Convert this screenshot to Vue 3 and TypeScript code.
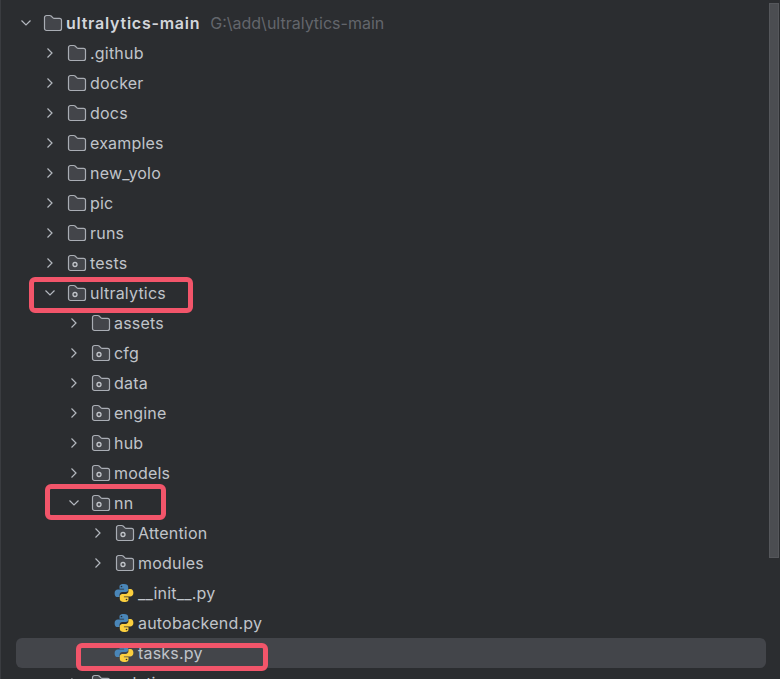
<template>
    <div class="panel">
        <div
            v-for="row in rows"
            :key="row.name + row.depth"
            class="row"
            :class="{ selected: row.selected }"
            :style="{ paddingLeft: 18 + row.depth * 24 - (row.selected ? 16 : 0) + 'px' }"
        >
            <span class="arrow">
                <svg v-if="row.kind !== 'py'" width="16" height="16" viewBox="0 0 16 16" fill="none">
                    <path v-if="row.open" d="M3.500 5.500 8 10l4.500-4.500" stroke="#b4b8bf" stroke-width="1.200" />
                    <path v-else d="M5.500 3.500 10 8l-4.500 4.500" stroke="#b4b8bf" stroke-width="1.200" />
                </svg>
            </span>
            <span class="icon">
                <svg v-if="row.kind === 'py'" class="py-icon" width="20" height="20" viewBox="0 0 20 20">
                    <path
                        d="M9.800 1c-3.800 0-4.300 1.500-4.300 2.800v2h4.600v.7H3.700C2.100 6.500.6 7.700.6 10.200s1.300 3.900 2.900 3.900h2v-2.200c0-1.600 1.300-2.900 2.900-2.900h3.400c1.300 0 2.400-1 2.400-2.300V3.900C14.200 2.300 12.800 1 9.800 1Z"
                        fill="#4a86b8"
                    />
                    <circle cx="7.500" cy="3.500" r=".8" fill="#2b2d30" />
                    <path
                        d="M10.200 19c3.800 0 4.300-1.500 4.300-2.800v-2H9.900v-.7h6.400c1.600 0 3.100-1.200 3.100-3.700s-1.300-3.900-2.900-3.900h-2v2.200c0 1.600-1.300 2.900-2.900 2.900H8.200c-1.300 0-2.400 1-2.400 2.300v2.800c0 1.600 1.400 2.900 4.400 2.900Z"
                        fill="#fbcf3e"
                    />
                    <circle cx="12.500" cy="16.500" r=".8" fill="#2b2d30" />
                </svg>
                <svg v-else width="20" height="20" viewBox="0 0 20 20" fill="none">
                    <path
                        d="M1.500 4.500a2 2 0 0 1 2-2h3.300c.5 0 1 .2 1.300.5l1.900 1.900c.3.300.7.400 1.100.400h5.400a2 2 0 0 1 2 2v8.200a2 2 0 0 1-2 2h-13a2 2 0 0 1-2-2V4.500Z"
                        fill="#43454a"
                        stroke="#a9adb4"
                        stroke-width="1.200"
                    />
                    <circle v-if="row.kind === 'module'" cx="8" cy="11.500" r="2" stroke="#c3c6cb" stroke-width="1.300" />
                </svg>
            </span>
            <span class="name" :class="{ root: row.depth === 0 }">{{ row.name }}</span>
            <span v-if="row.hint" class="hint">{{ row.hint }}</span>
        </div>

        <div class="scrollbar"></div>

        <div class="mark mark-ultralytics"></div>
        <div class="mark mark-nn"></div>
        <div class="mark mark-tasks"></div>
    </div>
</template>

<script setup lang="ts">
interface Row {
    name: string;
    depth: number;
    kind: "folder" | "module" | "py";
    open?: boolean;
    selected?: boolean;
    hint?: string;
}

const rows: Row[] = [
    { name: "ultralytics-main", depth: 0, kind: "folder", open: true, hint: "G:\\add\\ultralytics-main" },
    { name: ".github", depth: 1, kind: "folder" },
    { name: "docker", depth: 1, kind: "folder" },
    { name: "docs", depth: 1, kind: "folder" },
    { name: "examples", depth: 1, kind: "folder" },
    { name: "new_yolo", depth: 1, kind: "folder" },
    { name: "pic", depth: 1, kind: "folder" },
    { name: "runs", depth: 1, kind: "folder" },
    { name: "tests", depth: 1, kind: "module" },
    { name: "ultralytics", depth: 1, kind: "module", open: true },
    { name: "assets", depth: 2, kind: "folder" },
    { name: "cfg", depth: 2, kind: "module" },
    { name: "data", depth: 2, kind: "module" },
    { name: "engine", depth: 2, kind: "module" },
    { name: "hub", depth: 2, kind: "module" },
    { name: "models", depth: 2, kind: "module" },
    { name: "nn", depth: 2, kind: "module", open: true },
    { name: "Attention", depth: 3, kind: "module" },
    { name: "modules", depth: 3, kind: "module" },
    { name: "__init__.py", depth: 3, kind: "py" },
    { name: "autobackend.py", depth: 3, kind: "py" },
    { name: "tasks.py", depth: 3, kind: "py", selected: true },
    { name: "solutions", depth: 2, kind: "module" },
];
</script>

<style scoped>
.panel {
    position: relative;
    width: 780px;
    height: 679px;
    padding-top: 8px;
    box-sizing: border-box;
    overflow: hidden;
    background: #2b2d30;
    border-left: 1px solid #3a3c40;
    font-family: Inter, "Noto Sans", sans-serif;
    font-size: 16px;
    color: #c0c4ca;
}

.row {
    display: flex;
    align-items: center;
    height: 30px;
    margin-left: -1px;
    white-space: nowrap;
}

.row.selected {
    background: #43454a;
    border-radius: 6px;
    margin-left: 15px;
    margin-right: 14px;
}

.arrow {
    display: flex;
    width: 16px;
    height: 16px;
    flex: none;
}

.icon {
    display: flex;
    width: 20px;
    height: 20px;
    flex: none;
    margin-left: 9px;
}

.py-icon {
    margin-left: -1px;
}

.name {
    margin-left: 3px;
    letter-spacing: 0.2px;
}

.name.root {
    font-weight: 600;
    letter-spacing: 0.75px;
    color: #d3d6db;
}

.hint {
    margin-left: 10px;
    color: #63666c;
}

.scrollbar {
    position: absolute;
    top: 3px;
    right: 1px;
    width: 10px;
    height: 555px;
    box-sizing: border-box;
    background: #4b4d51;
    border: 1px solid #55575b;
}

.mark {
    position: absolute;
    box-sizing: border-box;
    border: 5px solid #f2556a;
    border-radius: 6px;
}

.mark-ultralytics {
    left: 28px;
    top: 277px;
    width: 164px;
    height: 36px;
}

.mark-nn {
    left: 44px;
    top: 484px;
    width: 121px;
    height: 36px;
}

.mark-tasks {
    left: 75px;
    top: 643px;
    width: 192px;
    height: 28px;
}
</style>

<style>
html,
body {
    margin: 0;
    background: #2b2d30;
}
</style>
